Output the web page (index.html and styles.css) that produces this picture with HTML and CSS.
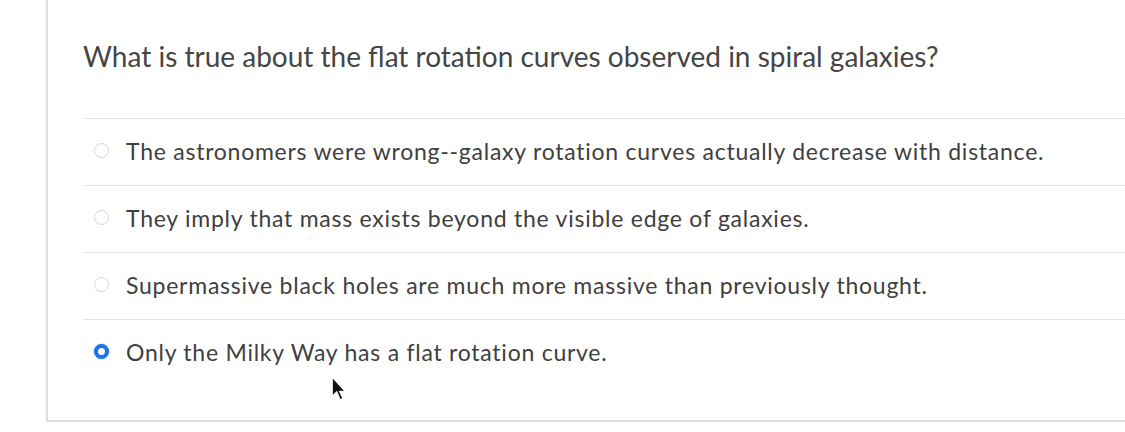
FILE: index.html
```html
<!DOCTYPE html>
<html>
<head>
<meta charset="utf-8">
<link rel="stylesheet" href="styles.css">
</head>
<body>
<div class="card">
  <div class="question">What is true about the flat rotation curves observed in spiral galaxies?</div>
  <div class="answers">
    <div class="answer"><span class="radio"></span><span class="label">The astronomers were wrong--galaxy rotation curves actually decrease with distance.</span></div>
    <div class="answer"><span class="radio"></span><span class="label">They imply that mass exists beyond the visible edge of galaxies.</span></div>
    <div class="answer"><span class="radio"></span><span class="label">Supermassive black holes are much more massive than previously thought.</span></div>
    <div class="answer last"><span class="radio checked"></span><span class="label">Only the Milky Way has a flat rotation curve.</span></div>
  </div>
</div>
<svg class="cursor" width="16" height="26" viewBox="0 0 14 23"><path d="M1 1 L1 18 L5 14 L8 21 L10.5 20 L7.5 13.5 L12.5 13.5 Z" fill="#111" stroke="#fff" stroke-width="1"/></svg>
</body>
</html>
```
FILE: styles.css
```css
html, body {
  margin: 0;
  padding: 0;
  background: #fff;
}
body {
  font-family: Lato, "Open Sans", sans-serif;
  color: #444;
  position: relative;
  width: 1125px;
  height: 432px;
  overflow: hidden;
}
.card {
  margin-left: 46px;
  margin-top: -2px;
  border: 2px solid #dedede;
  border-right: none;
  height: 424px;
  box-sizing: border-box;
  padding-left: 35px;
}
.question {
  font-size: 28px;
  line-height: 34px;
  padding-top: 39px;
  height: 118px;
  box-sizing: border-box;
  color: #454545;
}
.answer {
  display: flex;
  align-items: center;
  height: 67px;
  border-top: 1px solid #e4e4e4;
  box-sizing: border-box;
  padding-bottom: 3px;
}
.radio {
  width: 13px;
  height: 13px;
  border: 1px solid #d6d6d6;
  border-radius: 50%;
  margin-left: 11px;
  margin-right: 17px;
  flex: none;
  background: #fff;
}
.radio.checked {
  width: 7px;
  height: 7px;
  border: 4px solid #1a73e8;
  box-shadow: 0 0 2px rgba(26,115,232,0.5);
}
.label {
  font-size: 23px;
  letter-spacing: 0.75px;
  color: #404040;
}
.cursor {
  position: absolute;
  left: 331px;
  top: 376px;
}
```
